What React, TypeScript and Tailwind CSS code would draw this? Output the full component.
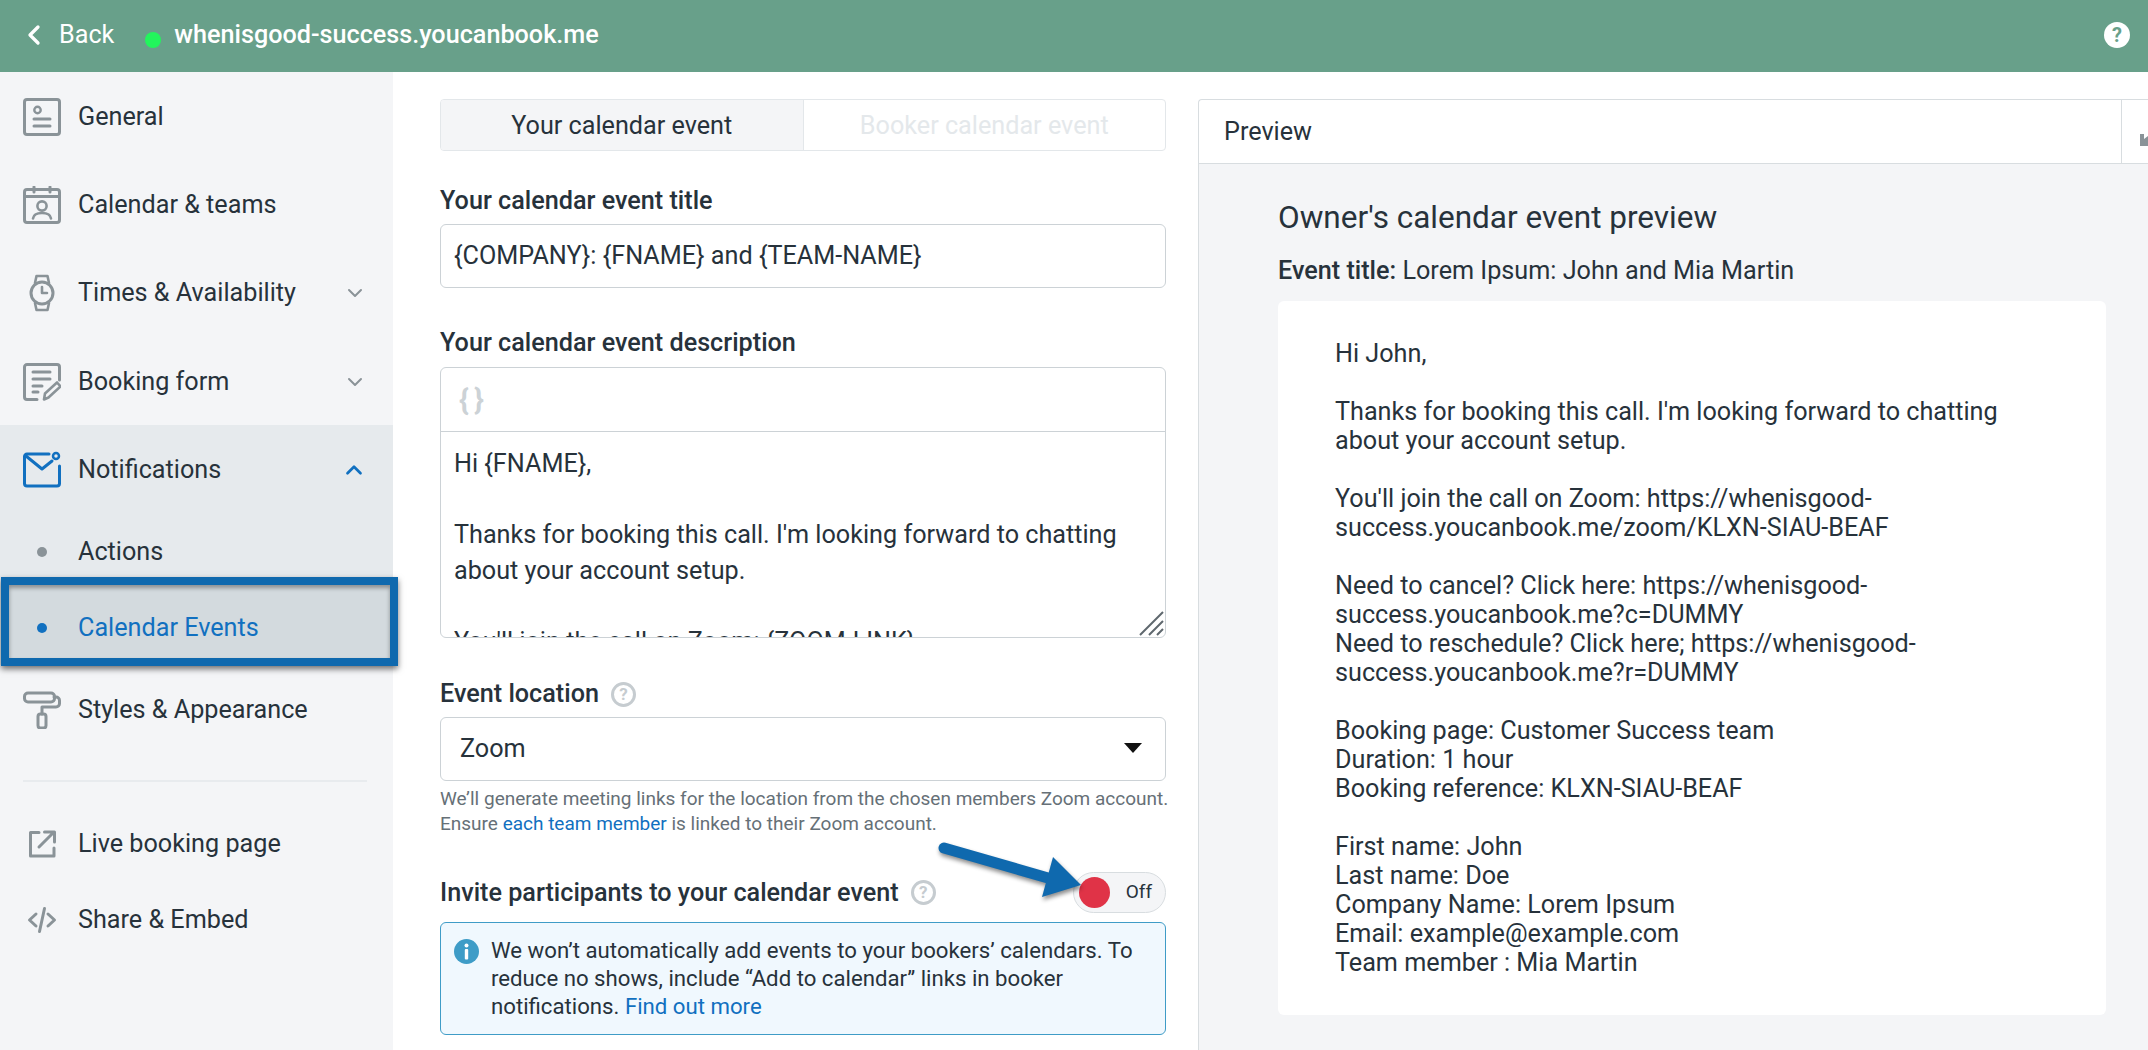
import React from 'react';
import { ChevronLeft, ChevronDown, ChevronUp } from 'lucide-react';

const iconProps = {
  width: 38,
  height: 38,
  viewBox: '0 0 38 38',
  fill: 'none',
  stroke: '#8a9398',
  strokeWidth: 3,
  strokeLinecap: 'round' as const,
  strokeLinejoin: 'round' as const,
};

const GeneralIcon = () => (
  <svg {...iconProps}>
    <rect x="1.5" y="1.5" width="35" height="35" rx="2.5" />
    <circle cx="14.5" cy="12" r="3.2" strokeWidth="2.4" />
    <path d="M11 21h16M11 28h16" />
  </svg>
);

const CalendarIcon = () => (
  <svg {...iconProps}>
    <rect x="1.5" y="3.5" width="35" height="33" rx="2.5" />
    <path d="M2 10.5h34M11 1v5M27 1v5" />
    <circle cx="19" cy="20" r="4.6" strokeWidth="2.6" />
    <path d="M10 32.5c.5-4 4-5.5 9-5.5s8.500 1.500 9 5.500" strokeWidth="2.6" />
  </svg>
);

const WatchIcon = () => (
  <svg {...iconProps}>
    <path d="M12 9l1.500-7h11l1.500 7M12 29l1.500 7h11l1.500-7" strokeWidth="2.600" />
    <circle cx="19" cy="19" r="11" />
    <path d="M19 13v6h5" strokeWidth="2.600" />
  </svg>
);

const FormIcon = () => (
  <svg {...iconProps}>
    <path d="M14 36.500H4a2.500 2.500 0 0 1-2.500-2.500V4A2.500 2.500 0 0 1 4 1.500h30A2.500 2.500 0 0 1 36.500 4v13" />
    <path d="M10 9h17M10 16h17M10 23h9M10 29h5" />
    <path d="M21 36.500l1-6 12-11 3.500 4-12 11z" strokeWidth="2.600" />
  </svg>
);

const MailIcon = () => (
  <svg {...iconProps} stroke="#1170c0">
    <path d="M26 3H4a2.500 2.500 0 0 0-2.500 2.500v27A2.500 2.500 0 0 0 4 35h30a2.500 2.500 0 0 0 2.500-2.500V15" />
    <path d="M3 5l16 13 10-8" />
    <circle cx="33" cy="5" r="3" strokeWidth="2.500" />
  </svg>
);

const RollerIcon = () => (
  <svg {...iconProps}>
    <rect x="1.500" y="2" width="30" height="9" rx="3.500" />
    <path d="M31 6h2a3.500 3.500 0 0 1 3.500 3.500v3A3.500 3.500 0 0 1 33 16H19v7" />
    <rect x="15" y="23" width="8" height="14" rx="2.500" />
  </svg>
);

const ExternalIcon = () => (
  <svg {...iconProps}>
    <path d="M16 7.500H7.500v23.500h23.500V23" />
    <path d="M16 22L30.500 7.500M21.500 7h10v10" />
  </svg>
);

const CodeIcon = () => (
  <svg {...iconProps}>
    <path d="M13 13l-6.500 6 6.500 6M25 13l6.500 6-6.500 6M21.500 7.500l-5 23" />
  </svg>
);

const HelpCircle = () => (
  <span className="ml-[12px] flex h-[25px] w-[25px] items-center justify-center rounded-full border-[3px] border-[#c6ccd0] text-[17px] font-bold text-[#c6ccd0]">
    ?
  </span>
);

interface NavRowProps {
  icon: React.ReactNode;
  label: string;
  chevron?: boolean;
  className?: string;
}

const NavRow: React.FC<NavRowProps> = ({ icon, label, chevron, className }) => (
  <div className={`flex h-[88px] items-center pl-[23px] pr-[26px] ${className ?? ''}`}>
    <div className="flex w-[38px] justify-center">{icon}</div>
    <span className="ml-[17px] flex-1">{label}</span>
    {chevron && <ChevronDown size={24} strokeWidth={2} className="text-[#8a9398]" />}
  </div>
);

const Sidebar = () => (
  <aside className="w-[393px] shrink-0 bg-[#f4f5f7] pt-[1px] text-[25.2px] text-[#27323b]">
    <NavRow icon={<GeneralIcon />} label="General" />
    <NavRow icon={<CalendarIcon />} label="Calendar & teams" />
    <NavRow icon={<WatchIcon />} label="Times & Availability" chevron />
    <NavRow icon={<FormIcon />} label="Booking form" chevron className="pt-[2px]" />
    <div className="h-[240px] bg-[#e6eaed]">
      <div className="flex h-[88px] items-center pl-[23px] pr-[26px] pt-[2px]">
        <MailIcon />
        <span className="ml-[17px] flex-1">Notifications</span>
        <ChevronUp size={26} strokeWidth={2.500} className="text-[#1170c0]" />
      </div>
      <div className="flex h-[76px] items-center pl-[37px] pt-[2px]">
        <span className="h-[10px] w-[10px] rounded-full bg-[#8a9398]" />
        <span className="ml-[31px]">Actions</span>
      </div>
      <div className="relative flex h-[76px] items-center pl-[37px] pt-[2px] text-[#1170c0]">
        <div className="absolute bottom-[-1px] left-[1px] right-[-5px] top-[-12px] border-[8px] border-[#0f69ae] bg-[#d3dade] shadow-[0_3px_6px_rgba(0,0,0,0.55),inset_0_3px_4px_rgba(0,0,0,0.35)]" />
        <span className="relative h-[10px] w-[10px] rounded-full bg-[#1170c0]" />
        <span className="relative ml-[31px]">Calendar Events</span>
      </div>
    </div>
    <NavRow icon={<RollerIcon />} label="Styles & Appearance" className="pt-[2px]" />
    <div className="mx-[23px] mt-[27px] h-[2px] w-[344px] bg-[#e8ebee]" />
    <div className="mt-[24px]">
      <div className="flex h-[76px] items-center pl-[23px]">
        <ExternalIcon />
        <span className="ml-[17px]">Live booking page</span>
      </div>
      <div className="flex h-[76px] items-center pl-[23px]">
        <CodeIcon />
        <span className="ml-[17px]">Share &amp; Embed</span>
      </div>
    </div>
  </aside>
);

const FormColumn = () => (
  <section className="relative ml-[47px] w-[726px] shrink-0 pt-[27px] text-[25.2px] text-[#27323b]">
    <div className="flex h-[52px] overflow-hidden rounded border border-[#e3e7ea] text-center leading-[52px]">
      <div className="flex-1 border-r border-[#e3e7ea] bg-[#f4f5f7]">Your calendar event</div>
      <div className="flex-1 text-[#e4e8eb]">Booker calendar event</div>
    </div>

    <label className="mt-[36px] block font-medium leading-[28px]">Your calendar event title</label>
    <div className="mt-[9px] flex h-[64px] items-center rounded-md border border-[#ccd2d6] px-[13px]">
      {'{COMPANY}: {FNAME} and {TEAM-NAME}'}
    </div>

    <label className="mt-[41px] block font-medium leading-[28px]">Your calendar event description</label>
    <div className="relative mt-[10px] h-[271px] overflow-hidden rounded-md border border-[#ccd2d6]">
      <div className="flex h-[64px] items-center border-b border-[#ccd2d6] pl-[18px] text-[30px] font-bold tracking-[5px] text-[#ccd2d6]">
        {'{}'}
      </div>
      <div className="px-[13px] pt-[14px] leading-[36px]">
        <p>{'Hi {FNAME},'}</p>
        <p className="mt-[35px]">Thanks for booking this call. I'm looking forward to chatting about your account setup.</p>
        <p className="mt-[35px] whitespace-nowrap">{"You'll join the call on Zoom: {ZOOM-LINK}"}</p>
      </div>
      <svg className="absolute bottom-[1px] right-[1px]" width="26" height="26" viewBox="0 0 26 26" stroke="#5f686e" strokeWidth="2">
        <path d="M2 25L25 2M11 25L25 11M19 25l6-6" />
      </svg>
    </div>

    <div className="mt-[42px] flex items-center font-medium leading-[28px]">
      Event location
      <HelpCircle />
    </div>
    <div className="mt-[9px] flex h-[64px] items-center justify-between rounded-md border border-[#ccd2d6] pl-[19px] pr-[23px]">
      <span>Zoom</span>
      <span className="mb-[3px] h-0 w-0 border-x-[9px] border-t-[10px] border-x-transparent border-t-[#111]" />
    </div>
    <p className="mt-[5px] whitespace-nowrap text-[19px] leading-[25px] text-[#667077]">
      We’ll generate meeting links for the location from the chosen members Zoom account.
      <br />
      Ensure <span className="text-[#1170c0]">each team member</span> is linked to their Zoom account.
    </p>

    <div className="mt-[36px] flex h-[41px] items-center justify-between font-medium">
      <div className="flex items-center">
        Invite participants to your calendar event
        <HelpCircle />
      </div>
      <div className="flex h-[41px] w-[93px] items-center justify-between rounded-full border border-[#d8dde0] bg-[#f4f5f7] pl-[5px] pr-[13px] text-[19px] font-normal">
        <span className="h-[31px] w-[31px] rounded-full bg-[#e03347]" />
        <span>Off</span>
      </div>
    </div>

    <div className="mt-[9px] flex h-[113px] rounded-md border border-[#3f9cc7] bg-[#f0f8fe] pl-[13px] pt-[13px] text-[22.2px] leading-[28px]">
      <svg className="mt-[3px] shrink-0" width="25" height="25" viewBox="0 0 25 25">
        <circle cx="12.500" cy="12.500" r="12.500" fill="#3e9cc7" />
        <circle cx="12.500" cy="6.500" r="2" fill="#fff" />
        <rect x="10.800" y="10" width="3.400" height="10.500" rx="1" fill="#fff" />
      </svg>
      <p className="ml-[12px] pr-[20px]">
        We won’t automatically add events to your bookers’ calendars. To reduce no shows, include “Add to calendar” links in booker notifications.{' '}
        <span className="text-[#1170c0]">Find out more</span>
      </p>
    </div>

    <svg className="absolute left-[490px] top-[759px] drop-shadow-[1px_3px_2px_rgba(0,0,0,0.45)]" width="160" height="90" viewBox="0 0 160 90">
      <path d="M14 17l111 32" stroke="#0f69ae" strokeWidth="11" strokeLinecap="round" />
      <path d="M123 26l28 28-39 12z" fill="#0f69ae" />
    </svg>
  </section>
);

const previewBlocks = [
  ['Hi John,'],
  ["Thanks for booking this call. I'm looking forward to chatting about your account setup."],
  ["You'll join the call on Zoom: https://whenisgood-success.youcanbook.me/zoom/KLXN-SIAU-BEAF"],
  ['Need to cancel? Click here: https://whenisgood-success.youcanbook.me?c=DUMMY', 'Need to reschedule? Click here; https://whenisgood-success.youcanbook.me?r=DUMMY'],
  ['Booking page: Customer Success team', 'Duration: 1 hour', 'Booking reference: KLXN-SIAU-BEAF'],
  ['First name: John', 'Last name: Doe', 'Company Name: Lorem Ipsum', 'Email: example@example.com', 'Team member : Mia Martin'],
];

const PreviewPanel = () => (
  <section className="ml-[32px] flex-1 pt-[27px] text-[#27323b]">
    <div className="flex h-[65px] rounded-tl border-l border-t border-b border-[#d8dde0] bg-white">
      <div className="flex flex-1 items-center pl-[25px] text-[25.2px]">Preview</div>
      <div className="flex w-[27px] items-center border-l border-[#d8dde0] pl-[18px] pt-[16px]">
        <svg width="8" height="12" viewBox="0 0 8 12" fill="#8a9398">
          <path d="M0 0h4v5l4-3v10H0z" />
        </svg>
      </div>
    </div>
    <div className="h-[890px] border-l border-[#d8dde0] bg-[#f4f5f7] pl-[79px] pr-[42px] pt-[36px]">
      <h2 className="text-[31.5px] leading-[36px]">Owner's calendar event preview</h2>
      <p className="mt-[20px] text-[25.2px] leading-[29px]">
        <span className="font-medium">Event title:</span> Lorem Ipsum: John and Mia Martin
      </p>
      <div className="mt-[16px] h-[714px] rounded-md bg-white pb-[40px] pl-[57px] pr-[60px] pt-[38px] text-[25.2px] leading-[29px]">
        {previewBlocks.map((lines, i) => (
          <div key={i} className="mb-[29px]">
            {lines.map((line) => (
              <p key={line}>{line}</p>
            ))}
          </div>
        ))}
      </div>
    </div>
  </section>
);

export default function App() {
  return (
    <div className="flex h-[1050px] w-[2148px] flex-col overflow-hidden bg-white font-['Roboto',sans-serif]">
      <header className="flex h-[72px] shrink-0 items-center bg-[#68a08a] pb-[2px] pl-[18px] pr-[18px] text-[25.2px] text-white">
        <ChevronLeft size={32} strokeWidth={2.500} />
        <span className="ml-[9px]">Back</span>
        <span className="ml-[31px] mt-[10px] h-[16px] w-[16px] rounded-full bg-[#22f55c]" />
        <span className="ml-[13px] font-medium">whenisgood-success.youcanbook.me</span>
        <span className="ml-auto flex h-[26px] w-[26px] items-center justify-center rounded-full bg-white text-[20px] font-bold text-[#68a08a]">
          ?
        </span>
      </header>
      <div className="flex flex-1">
        <Sidebar />
        <FormColumn />
        <PreviewPanel />
      </div>
    </div>
  );
}
